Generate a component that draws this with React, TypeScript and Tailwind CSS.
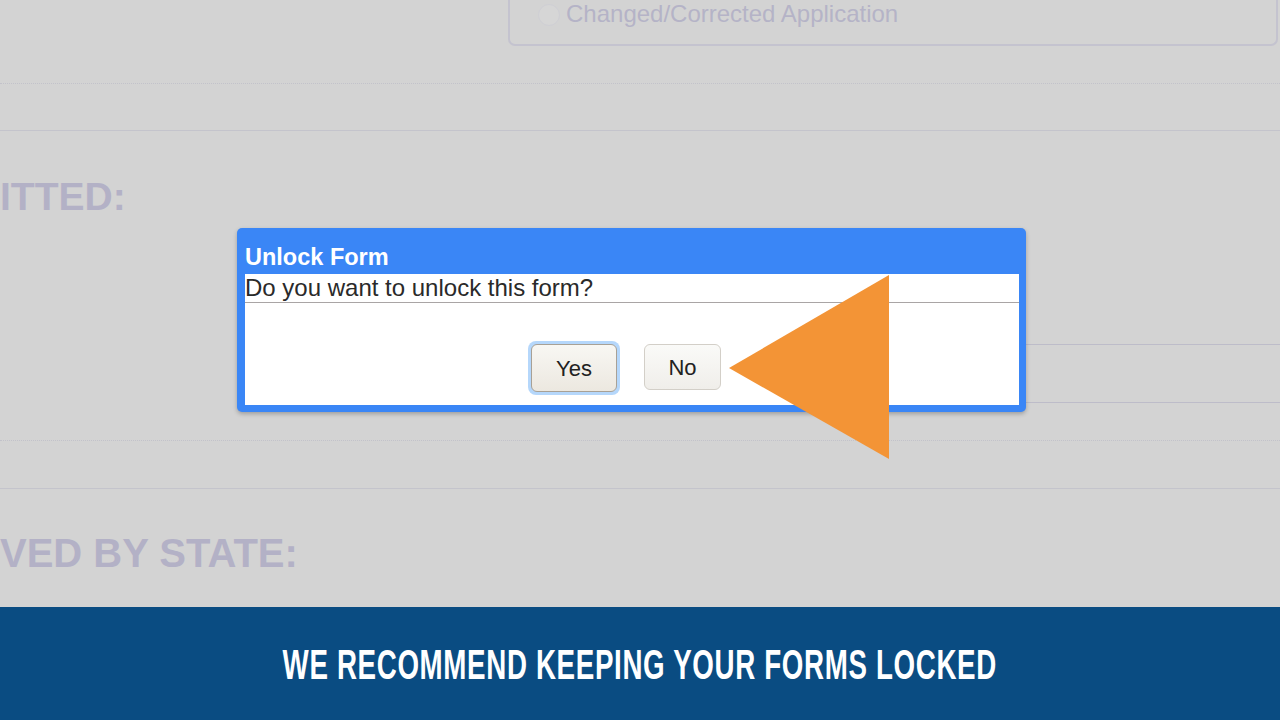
import React from 'react';

const faded = "text-[#b5b3c7]";

export default function App() {
  return (
    <div className="relative w-[1280px] h-[720px] overflow-hidden font-['Liberation_Sans',Arial,sans-serif]">
      {/* Form behind the dialog */}
      <div className="h-[607px] bg-[#d3d3d3] flex flex-col overflow-hidden">
        {/* Radio group box (cut off at top) */}
        <div className="h-[46px] flex pl-[508px] pr-[2px]">
          <div className="flex-1 border-2 border-t-0 border-[#c4c3cf] rounded-b-[7px] flex items-start pl-[28px] pt-[2px]">
            <span className="mt-[2px] w-[22px] h-[22px] rounded-full bg-[#d6d6d6] border border-[#cfcfd4]" />
            <span className={`ml-[6px] text-[24px] leading-[24px] ${faded}`}>Changed/Corrected Application</span>
          </div>
        </div>
        <div className="h-[37px]" />
        <div className="h-[47px] border-t border-dotted border-[#c2c2ca]" />
        <div className="border-t border-[#c4c4cc]" />
        <div className="mt-[46px] text-[39px] leading-[39px] font-bold text-[#b3b1c6] whitespace-nowrap">ITTED:</div>

        {/* Input box under the dialog */}
        <div className="mt-[128px] ml-[600px] h-[59px] border-y border-[#bdbcc9]" />

        <div className="h-[37px]" />
        <div className="h-[48px] border-t border-dotted border-[#c2c2ca]" />
        <div className="border-t border-[#c4c4cc]" />
        <div className="mt-[44px] text-[40px] leading-[40px] font-bold text-[#b3b1c6] whitespace-nowrap">VED BY STATE:</div>
      </div>

      {/* Caption bar */}
      <div className="h-[113px] bg-[#0a4c82] flex items-center justify-center">
        <span className="inline-block scale-x-[0.645] text-white font-bold text-[43px] leading-none tracking-[1px] whitespace-nowrap mt-[2px]">
          WE RECOMMEND KEEPING YOUR FORMS LOCKED
        </span>
      </div>

      {/* Unlock dialog */}
      <div className="absolute left-[237px] top-[228px] w-[789px] h-[184px] bg-[#3a86f6] rounded-[5px] shadow-[0_2px_4px_rgba(0,0,0,0.25)] flex flex-col pl-[8px] pr-[7px] pb-[7px]">
        <div className="h-[46px] flex items-end pb-[4px]">
          <span className="text-white font-bold text-[23.5px] leading-[26px]">Unlock Form</span>
        </div>
        <div className="flex-1 bg-white flex flex-col">
          <div className="h-[29px] border-b border-[#a9a5a5] flex items-center">
            <span className="text-[#2a2a2a] text-[24px] leading-[26px]">Do you want to unlock this form?</span>
          </div>
          <div className="flex-1 flex items-start pt-[38px] pl-[283px] gap-[24px]">
            <div className="rounded-[8px] p-[3px] bg-[#b5d7fb]">
              <button className="w-[86px] h-[48px] rounded-[6px] border border-[#a8a196] bg-gradient-to-b from-[#f8f7f3] to-[#ece8e0] text-[22px] text-[#222]">
                Yes
              </button>
            </div>
            <button className="mt-[3px] w-[77px] h-[46px] rounded-[6px] border border-[#d3cfc8] bg-gradient-to-b from-[#fafaf8] to-[#f0eeea] text-[22px] text-[#222]">
              No
            </button>
          </div>
        </div>
      </div>

      {/* Pointer arrow */}
      <svg className="absolute left-0 top-0 pointer-events-none" width="1280" height="720">
        <polygon points="729,368 889,275 889,459" fill="#f39436" />
      </svg>
    </div>
  );
}
